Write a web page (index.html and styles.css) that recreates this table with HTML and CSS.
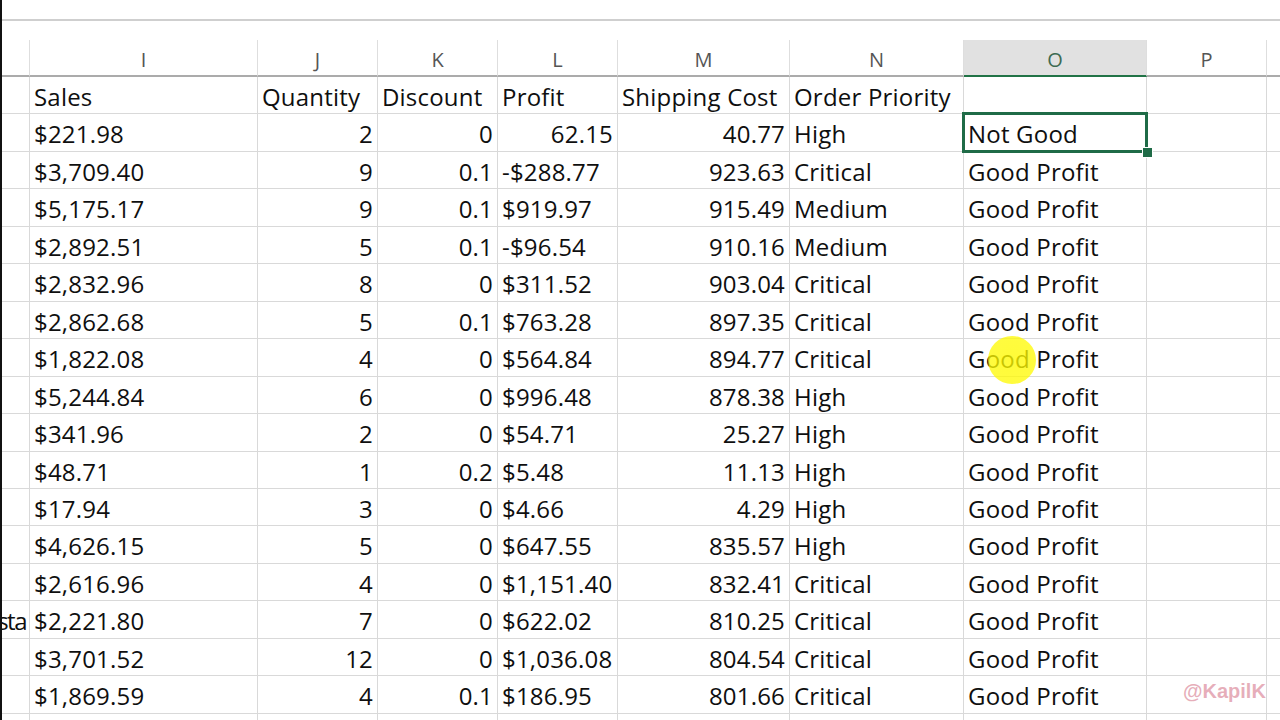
FILE: index.html
```html
<!DOCTYPE html>
<html>
<head>
<meta charset="utf-8">
<link rel="stylesheet" href="styles.css">
</head>
<body>
<div class="frame">
  <div class="topbar"></div>
  <div class="sheet">
    <div class="ch"></div><div class="ch">I</div><div class="ch">J</div><div class="ch">K</div><div class="ch">L</div><div class="ch">M</div><div class="ch">N</div><div class="ch ch-sel">O</div><div class="ch">P</div><div class="ch ch-end"></div>

    <div class="c"></div><div class="c">Sales</div><div class="c">Quantity</div><div class="c">Discount</div><div class="c">Profit</div><div class="c">Shipping Cost</div><div class="c">Order Priority</div><div class="c"></div><div class="c"></div><div class="c end"></div>

    <div class="c"></div><div class="c">$221.98</div><div class="c r">2</div><div class="c r">0</div><div class="c r">62.15</div><div class="c r">40.77</div><div class="c">High</div><div class="c sel">Not Good<span class="handle"></span></div><div class="c"></div><div class="c end"></div>

    <div class="c"></div><div class="c">$3,709.40</div><div class="c r">9</div><div class="c r">0.1</div><div class="c">-$288.77</div><div class="c r">923.63</div><div class="c">Critical</div><div class="c">Good Profit</div><div class="c"></div><div class="c end"></div>

    <div class="c"></div><div class="c">$5,175.17</div><div class="c r">9</div><div class="c r">0.1</div><div class="c">$919.97</div><div class="c r">915.49</div><div class="c">Medium</div><div class="c">Good Profit</div><div class="c"></div><div class="c end"></div>

    <div class="c"></div><div class="c">$2,892.51</div><div class="c r">5</div><div class="c r">0.1</div><div class="c">-$96.54</div><div class="c r">910.16</div><div class="c">Medium</div><div class="c">Good Profit</div><div class="c"></div><div class="c end"></div>

    <div class="c"></div><div class="c">$2,832.96</div><div class="c r">8</div><div class="c r">0</div><div class="c">$311.52</div><div class="c r">903.04</div><div class="c">Critical</div><div class="c">Good Profit</div><div class="c"></div><div class="c end"></div>

    <div class="c"></div><div class="c">$2,862.68</div><div class="c r">5</div><div class="c r">0.1</div><div class="c">$763.28</div><div class="c r">897.35</div><div class="c">Critical</div><div class="c">Good Profit</div><div class="c"></div><div class="c end"></div>

    <div class="c"></div><div class="c">$1,822.08</div><div class="c r">4</div><div class="c r">0</div><div class="c">$564.84</div><div class="c r">894.77</div><div class="c">Critical</div><div class="c">Good Profit</div><div class="c"></div><div class="c end"></div>

    <div class="c"></div><div class="c">$5,244.84</div><div class="c r">6</div><div class="c r">0</div><div class="c">$996.48</div><div class="c r">878.38</div><div class="c">High</div><div class="c">Good Profit</div><div class="c"></div><div class="c end"></div>

    <div class="c"></div><div class="c">$341.96</div><div class="c r">2</div><div class="c r">0</div><div class="c">$54.71</div><div class="c r">25.27</div><div class="c">High</div><div class="c">Good Profit</div><div class="c"></div><div class="c end"></div>

    <div class="c"></div><div class="c">$48.71</div><div class="c r">1</div><div class="c r">0.2</div><div class="c">$5.48</div><div class="c r">11.13</div><div class="c">High</div><div class="c">Good Profit</div><div class="c"></div><div class="c end"></div>

    <div class="c"></div><div class="c">$17.94</div><div class="c r">3</div><div class="c r">0</div><div class="c">$4.66</div><div class="c r">4.29</div><div class="c">High</div><div class="c">Good Profit</div><div class="c"></div><div class="c end"></div>

    <div class="c"></div><div class="c">$4,626.15</div><div class="c r">5</div><div class="c r">0</div><div class="c">$647.55</div><div class="c r">835.57</div><div class="c">High</div><div class="c">Good Profit</div><div class="c"></div><div class="c end"></div>

    <div class="c"></div><div class="c">$2,616.96</div><div class="c r">4</div><div class="c r">0</div><div class="c">$1,151.40</div><div class="c r">832.41</div><div class="c">Critical</div><div class="c">Good Profit</div><div class="c"></div><div class="c end"></div>

    <div class="c clip"><span>Costa</span></div><div class="c">$2,221.80</div><div class="c r">7</div><div class="c r">0</div><div class="c">$622.02</div><div class="c r">810.25</div><div class="c">Critical</div><div class="c">Good Profit</div><div class="c"></div><div class="c end"></div>

    <div class="c"></div><div class="c">$3,701.52</div><div class="c r">12</div><div class="c r">0</div><div class="c">$1,036.08</div><div class="c r">804.54</div><div class="c">Critical</div><div class="c">Good Profit</div><div class="c"></div><div class="c end"></div>

    <div class="c"></div><div class="c">$1,869.59</div><div class="c r">4</div><div class="c r">0.1</div><div class="c">$186.95</div><div class="c r">801.66</div><div class="c">Critical</div><div class="c">Good Profit</div><div class="c"></div><div class="c end"></div>

    <div class="c"></div><div class="c"></div><div class="c"></div><div class="c"></div><div class="c"></div><div class="c"></div><div class="c"></div><div class="c"></div><div class="c"></div><div class="c end"></div>
  </div>
</div>
<div class="cursor"></div>
<div class="watermark">@KapilK</div>
</body>
</html>
```

FILE: styles.css
```css
html, body {
  margin: 0;
  padding: 0;
  width: 1280px;
  height: 720px;
  overflow: hidden;
  background: #ffffff;
}

body {
  position: relative;
  font-family: "Open Sans", "Noto Sans", sans-serif;
}

.frame {
  height: 720px;
  border-left: 2px solid #111111;
  box-sizing: border-box;
  display: flex;
  flex-direction: column;
}

.topbar {
  height: 19px;
  flex: none;
  border-bottom: 2px solid #cfcfcf;
  margin-bottom: 19px;
  background: #ffffff;
}

.sheet {
  display: grid;
  grid-template-columns: 28px 228px 120px 120px 120px 172px 174px 183px 120px 1fr;
  grid-template-rows: 37px;
  grid-auto-rows: 37.46px;
}

.ch {
  box-sizing: border-box;
  height: 37px;
  border-right: 1px solid #dedede;
  border-bottom: 2px solid #ababab;
  padding-top: 4px;
  line-height: 31px;
  text-align: center;
  font-size: 20px;
  color: #555555;
}

.ch-sel {
  background: #e1e1e1;
  border-bottom-color: #217346;
  color: #3d6b52;
}

.ch-end {
  border-right: none;
}

.c {
  box-sizing: border-box;
  border-right: 1px solid #d9d9d9;
  border-bottom: 1px solid #d9d9d9;
  padding: 3px 4px 0 4px;
  line-height: 33.5px;
  font-size: 24px;
  letter-spacing: 0.2px;
  color: #0f0f0f;
  white-space: nowrap;
  overflow: hidden;
}

.c.r {
  text-align: right;
  padding-right: 4px;
}

.c.end {
  border-right: none;
}

.c.clip {
  display: flex;
  justify-content: flex-end;
  padding-right: 3px;
  letter-spacing: -1.5px;
}

.c.clip span {
  flex: none;
}

.sel {
  position: relative;
  overflow: visible;
  z-index: 2;
}

.sel::after {
  content: "";
  position: absolute;
  left: -2px;
  top: -2px;
  right: -2px;
  bottom: -2px;
  border: 3px solid #1f6b47;
}

.handle {
  position: absolute;
  right: -6px;
  bottom: -6px;
  width: 9px;
  height: 9px;
  background: #1f6b47;
  outline: 1px solid #ffffff;
  z-index: 3;
}

.cursor {
  position: absolute;
  left: 988px;
  top: 336px;
  width: 48px;
  height: 48px;
  border-radius: 50%;
  background: radial-gradient(circle, rgba(255, 250, 0, 0.78) 0%, rgba(255, 250, 0, 0.75) 85%, rgba(255, 250, 0, 0.3) 100%);
  z-index: 5;
}

.watermark {
  position: absolute;
  left: 1183px;
  top: 680px;
  font-family: "Liberation Sans", Arial, sans-serif;
  font-weight: bold;
  font-size: 20px;
  color: rgba(214, 120, 140, 0.6);
  z-index: 5;
}
```
